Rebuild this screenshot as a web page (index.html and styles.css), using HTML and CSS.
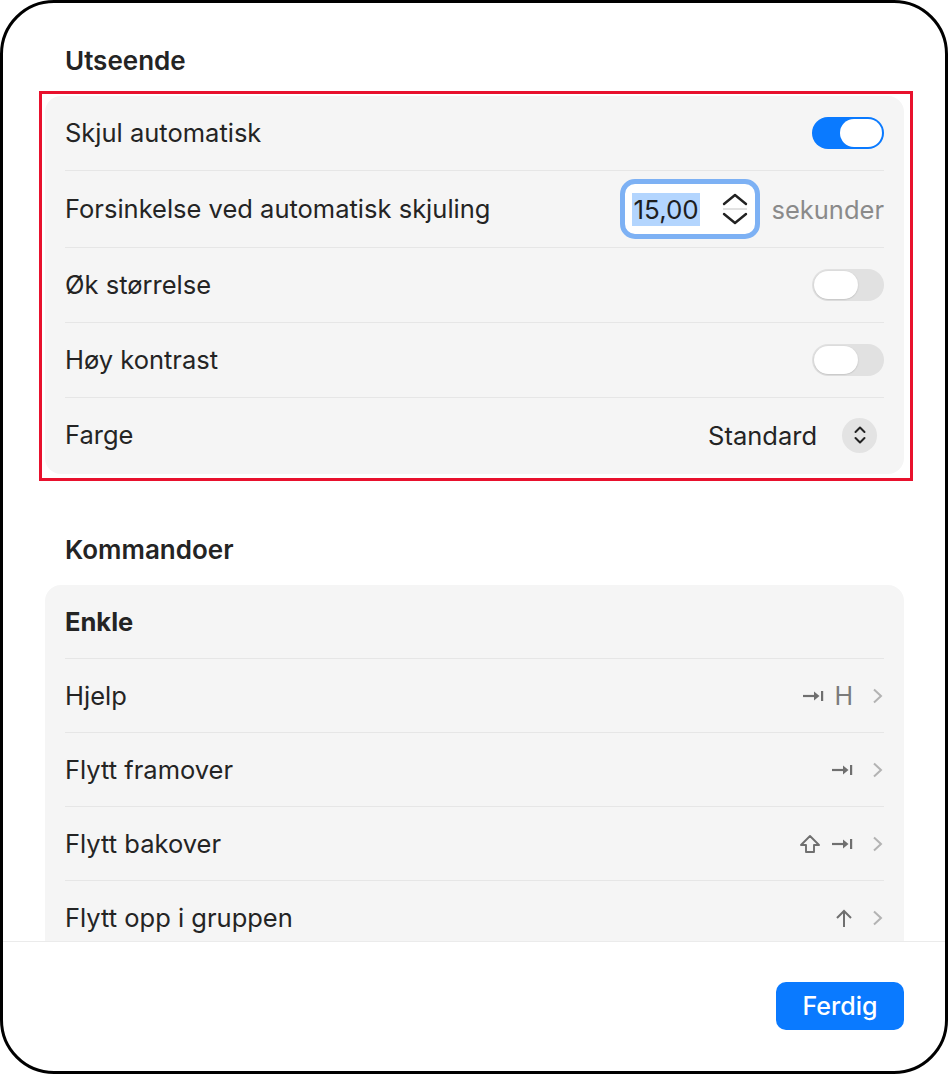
FILE: index.html
```html
<!DOCTYPE html>
<html lang="nb">
<head>
	<meta charset="UTF-8">
	<title>Innstillinger</title>
	<link rel="stylesheet" href="styles.css">
</head>
<body>
	<div class="window">
		<div class="scroll">
			<h2 class="section-title">Utseende</h2>
			<div class="highlight">
				<div class="card">
					<div class="row">
						<span class="label">Skjul automatisk</span>
						<span class="toggle on"><span class="knob"></span></span>
					</div>
					<div class="row tall">
						<span class="label">Forsinkelse ved automatisk skjuling</span>
						<span class="stepper-wrap">
							<span class="field">
								<span class="value">15,00</span>
								<span class="arrows">
									<svg width="28" height="14" viewBox="0 0 28 14"><polyline points="3,12 14,3 25,12" fill="none" stroke="#222" stroke-width="2.4" stroke-linecap="round" stroke-linejoin="round"/></svg>
									<span class="arrow-sep"></span>
									<svg width="28" height="14" viewBox="0 0 28 14"><polyline points="3,2 14,11 25,2" fill="none" stroke="#222" stroke-width="2.4" stroke-linecap="round" stroke-linejoin="round"/></svg>
								</span>
							</span>
							<span class="unit">sekunder</span>
						</span>
					</div>
					<div class="row">
						<span class="label">Øk størrelse</span>
						<span class="toggle"><span class="knob"></span></span>
					</div>
					<div class="row">
						<span class="label">Høy kontrast</span>
						<span class="toggle"><span class="knob"></span></span>
					</div>
					<div class="row">
						<span class="label">Farge</span>
						<span class="popup">
							<span class="popup-value">Standard</span>
							<span class="popup-btn">
								<svg width="14" height="20" viewBox="0 0 14 20"><polyline points="2.5,7 7,2.5 11.5,7" fill="none" stroke="#222" stroke-width="2" stroke-linecap="round" stroke-linejoin="round"/><polyline points="2.5,13 7,17.5 11.5,13" fill="none" stroke="#222" stroke-width="2" stroke-linecap="round" stroke-linejoin="round"/></svg>
							</span>
						</span>
					</div>
				</div>
			</div>

			<h2 class="section-title second">Kommandoer</h2>
			<div class="card commands">
				<div class="row group-head">
					<span class="label">Enkle</span>
				</div>
				<div class="row">
					<span class="label">Hjelp</span>
					<span class="shortcut">
						<svg class="tab" width="22" height="12" viewBox="0 0 22 12"><line x1="1" y1="6" x2="15" y2="6" stroke="#6f6f6f" stroke-width="2.2"/><polygon points="12,1.5 17.5,6 12,10.5" fill="#6f6f6f"/><rect x="19" y="1" width="2.2" height="10" fill="#6f6f6f"/></svg>
						<span class="key">H</span>
						<svg class="chev" width="12" height="16" viewBox="0 0 12 16"><polyline points="2,1.5 9,8 2,14.5" fill="none" stroke="#b3b3b3" stroke-width="2"/></svg>
					</span>
				</div>
				<div class="row">
					<span class="label">Flytt framover</span>
					<span class="shortcut">
						<svg class="tab" width="22" height="12" viewBox="0 0 22 12"><line x1="1" y1="6" x2="15" y2="6" stroke="#6f6f6f" stroke-width="2.2"/><polygon points="12,1.5 17.5,6 12,10.5" fill="#6f6f6f"/><rect x="19" y="1" width="2.2" height="10" fill="#6f6f6f"/></svg>
						<svg class="chev" width="12" height="16" viewBox="0 0 12 16"><polyline points="2,1.5 9,8 2,14.5" fill="none" stroke="#b3b3b3" stroke-width="2"/></svg>
					</span>
				</div>
				<div class="row">
					<span class="label">Flytt bakover</span>
					<span class="shortcut">
						<svg class="shift" width="22" height="20" viewBox="0 0 22 20"><path d="M11 2 L20 11 H15 V18 H7 V11 H2 Z" fill="none" stroke="#6f6f6f" stroke-width="1.9" stroke-linejoin="round"/></svg>
						<svg class="tab" width="22" height="12" viewBox="0 0 22 12"><line x1="1" y1="6" x2="15" y2="6" stroke="#6f6f6f" stroke-width="2.2"/><polygon points="12,1.5 17.5,6 12,10.5" fill="#6f6f6f"/><rect x="19" y="1" width="2.2" height="10" fill="#6f6f6f"/></svg>
						<svg class="chev" width="12" height="16" viewBox="0 0 12 16"><polyline points="2,1.5 9,8 2,14.5" fill="none" stroke="#b3b3b3" stroke-width="2"/></svg>
					</span>
				</div>
				<div class="row">
					<span class="label">Flytt opp i gruppen</span>
					<span class="shortcut">
						<svg class="up" width="18" height="20" viewBox="0 0 18 20"><line x1="9" y1="3" x2="9" y2="19" stroke="#6f6f6f" stroke-width="2"/><polyline points="2,10 9,3 16,10" fill="none" stroke="#6f6f6f" stroke-width="2"/></svg>
						<svg class="chev" width="12" height="16" viewBox="0 0 12 16"><polyline points="2,1.5 9,8 2,14.5" fill="none" stroke="#b3b3b3" stroke-width="2"/></svg>
					</span>
				</div>
			</div>
		</div>
		<div class="footer">
			<button class="done">Ferdig</button>
		</div>
	</div>
</body>
</html>
```

FILE: styles.css
```css
*{margin:0;padding:0;box-sizing:border-box;}
body{background:#fff;font-family:Inter,"Noto Sans",sans-serif;color:#242424;}
.window{width:948px;height:1074px;border:3px solid #000;border-radius:54px;overflow:hidden;display:flex;flex-direction:column;background:#fff;}
.scroll{flex:1;overflow:hidden;padding:43px 41px 0 42px;}
.section-title{font-size:26px;font-weight:600;line-height:30px;padding-left:20px;margin-bottom:15px;}
.section-title.second{margin-top:54px;margin-bottom:20px;}
.highlight{border:3px solid #e8112d;padding:2px 6px 4px 3px;margin:0 -9px 0 -6px;}
.card{background:#f5f5f5;border-radius:16px;padding:0 20px 2px;}
.row{display:flex;align-items:center;justify-content:space-between;height:75px;border-top:1.5px solid #e6e6e6;}
.row:first-child{border-top:none;height:74px;}
.row.tall{height:77px;}
.label{font-size:25.5px;line-height:30px;}
.commands .row{height:74px;}
.commands .row.group-head{height:73px;}
.group-head .label{font-weight:700;}
.toggle{width:72px;height:32px;border-radius:16px;background:#e1e1e1;padding:2px;display:flex;justify-content:flex-start;}
.toggle .knob{width:44px;height:28px;border-radius:14px;background:#fff;box-shadow:0 0.5px 1.5px rgba(0,0,0,0.2);}
.toggle.on{background:#0a7aff;justify-content:flex-end;}
.toggle.on .knob{width:42px;box-shadow:none;}
.stepper-wrap{display:flex;align-items:center;gap:11px;}
.field{width:140px;height:60px;border:5px solid #7db1f4;border-radius:15px;background:#fff;display:flex;align-items:center;padding:0 6px 0 7px;justify-content:space-between;}
.value{font-size:26px;line-height:33px;background:#b3d5fe;padding:0 1px;color:#1e1e1e;}
.arrows{display:flex;flex-direction:column;align-items:center;}
.arrow-sep{width:24px;height:1.5px;background:#e2e2e2;margin:2px 0;}
.unit{font-size:25.5px;color:#8a8a8a;}
.popup{display:flex;align-items:center;gap:25px;padding-right:7px;}
.popup-value{font-size:25.5px;}
.popup-btn{width:35px;height:35px;border-radius:50%;background:#e3e3e3;display:flex;align-items:center;justify-content:center;}
.shortcut{display:flex;align-items:center;gap:10px;}
.shortcut .key{font-size:25px;color:#7b7b7b;line-height:24px;}
.shortcut .chev{margin-left:9px;}
.footer{height:130px;border-top:1.5px solid #ebebeb;display:flex;justify-content:flex-end;padding:40px 41px 0 0;align-items:flex-start;flex-shrink:0;}
.done{width:128px;height:48px;border:none;border-radius:10px;background:#0a7aff;color:#fff;font-family:Inter,"Noto Sans",sans-serif;font-size:25px;line-height:30px;font-weight:500;}
```
